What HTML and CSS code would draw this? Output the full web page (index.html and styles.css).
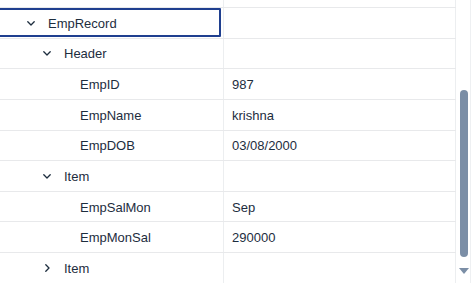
FILE: index.html
```html
<!DOCTYPE html>
<html>
<head>
<meta charset="utf-8">
<link rel="stylesheet" href="styles.css">
</head>
<body>
<div class="view">
  <div class="table">
    <div class="row row-top"><div class="cell tree"></div><div class="cell val"></div></div>
    <div class="row">
      <div class="cell tree lvl1 focused"><span class="tog"><svg width="8" height="5" viewBox="0 0 8 5"><polyline points="0.8,0.8 4,4 7.2,0.8" /></svg></span><span class="lbl">EmpRecord</span></div>
      <div class="cell val"></div>
    </div>
    <div class="row">
      <div class="cell tree lvl2"><span class="tog"><svg width="8" height="5" viewBox="0 0 8 5"><polyline points="0.8,0.8 4,4 7.2,0.8" /></svg></span><span class="lbl">Header</span></div>
      <div class="cell val"></div>
    </div>
    <div class="row">
      <div class="cell tree lvl3"><span class="tog"></span><span class="lbl">EmpID</span></div>
      <div class="cell val">987</div>
    </div>
    <div class="row">
      <div class="cell tree lvl3"><span class="tog"></span><span class="lbl">EmpName</span></div>
      <div class="cell val">krishna</div>
    </div>
    <div class="row">
      <div class="cell tree lvl3"><span class="tog"></span><span class="lbl">EmpDOB</span></div>
      <div class="cell val">03/08/2000</div>
    </div>
    <div class="row">
      <div class="cell tree lvl2"><span class="tog"><svg width="8" height="5" viewBox="0 0 8 5"><polyline points="0.8,0.8 4,4 7.2,0.8" /></svg></span><span class="lbl">Item</span></div>
      <div class="cell val"></div>
    </div>
    <div class="row">
      <div class="cell tree lvl3"><span class="tog"></span><span class="lbl">EmpSalMon</span></div>
      <div class="cell val">Sep</div>
    </div>
    <div class="row">
      <div class="cell tree lvl3"><span class="tog"></span><span class="lbl">EmpMonSal</span></div>
      <div class="cell val">290000</div>
    </div>
    <div class="row">
      <div class="cell tree lvl2"><span class="tog"><svg width="5" height="8" viewBox="0 0 5 8"><polyline points="0.8,0.8 4,4 0.8,7.2" /></svg></span><span class="lbl">Item</span></div>
      <div class="cell val"></div>
    </div>
  </div>
  <div class="scroll">
    <div class="thumb"></div>
    <svg class="arrow" width="10" height="6" viewBox="0 0 10 6"><polygon points="0,0 10,0 5,6" /></svg>
  </div>
</div>
</body>
</html>
```
FILE: styles.css
```css
html, body {
  margin: 0;
  padding: 0;
  background: #ffffff;
  overflow: hidden;
}
body {
  font-family: "Liberation Sans", Arial, sans-serif;
  font-size: 13px;
  color: #1d2d3e;
}
.view {
  display: flex;
  height: 283px;
  overflow: hidden;
}
.table {
  margin-left: -8px;
  width: 464px;
  flex: none;
  display: flex;
  flex-direction: column;
}
.row {
  display: grid;
  grid-template-columns: 232px 232px;
  height: 30.625px;
  flex: none;
  box-sizing: border-box;
  border-bottom: 1px solid #e8e9eb;
}
.row-top {
  height: 8px;
}
.cell {
  box-sizing: border-box;
  border-right: 1px solid #eceef0;
  display: flex;
  align-items: center;
  white-space: nowrap;
}
.val {
  padding-left: 8px;
  padding-top: 1px;
}
.tree {
  position: relative;
  padding-top: 1px;
}
.lvl1 { padding-left: 31px; }
.lvl2 { padding-left: 47px; }
.lvl3 { padding-left: 63px; }
.tog {
  width: 16px;
  margin-right: 9px;
  display: flex;
  justify-content: center;
  align-items: center;
  flex: none;
}
.tog svg polyline {
  fill: none;
  stroke: #1d2d3e;
  stroke-width: 1.3;
  stroke-linecap: round;
  stroke-linejoin: round;
}
.focused::after {
  content: "";
  position: absolute;
  top: 0;
  bottom: 1px;
  left: 0;
  right: 2px;
  border: 2px solid #1f3f8f;
  border-radius: 1px;
}
.scroll {
  width: 15px;
  flex: none;
  box-sizing: border-box;
  border-right: 1px solid #eef0f2;
  display: flex;
  flex-direction: column;
  align-items: center;
  padding-top: 90px;
}
.thumb {
  width: 8px;
  height: 167px;
  background: #7b8ea6;
  border-radius: 4px;
  margin-left: 1px;
}
.arrow {
  margin-top: 11px;
  margin-left: 1px;
}
.arrow polygon {
  fill: #7b8ea6;
}
```
